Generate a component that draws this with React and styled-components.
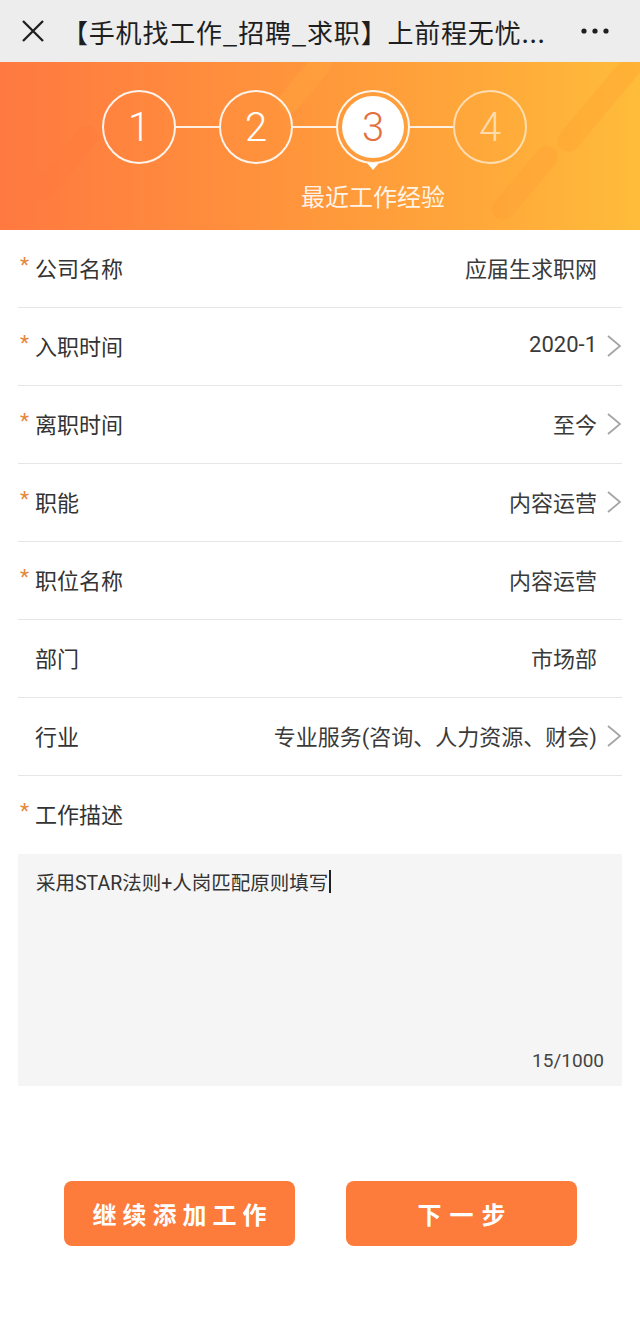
import React from 'react'
import styled, { createGlobalStyle } from 'styled-components'

const GlobalStyle = createGlobalStyle`
    body {
        margin: 0;
        background: #ffffff;
        font-family: Roboto, "Noto Sans CJK SC", sans-serif;
    }
`

const Page = styled.div`
    width: 640px;
    min-height: 1327px;
    background: #fff;
    display: flex;
    flex-direction: column;
`

const TopBar = styled.div`
    height: 62px;
    background: #ededed;
    display: flex;
    align-items: center;
    padding: 0 31px 0 21px;
`

const TopTitle = styled.div`
    flex: 1;
    margin-left: 17px;
    font-size: 26px;
    color: #1e1e1e;
    white-space: nowrap;
    font-family: "Noto Sans CJK SC", sans-serif;
    letter-spacing: 0.8px;
`

const Banner = styled.div`
    position: relative;
    overflow: hidden;
    height: 168px;
    background: linear-gradient(90deg, #ff7940 0%, #ff913c 40%, #ffa83a 75%, #ffbc3a 100%);
`

const Streak = styled.div`
    position: absolute;
    left: ${p => p.x}px;
    top: ${p => p.y}px;
    width: ${p => p.w}px;
    height: 22px;
    border-radius: 11px;
    transform: rotate(-50deg);
    background: ${p => p.c};
`

const Stepper = styled.div`
    position: relative;
    display: flex;
    align-items: center;
    padding: 28px 0 0 102px;
`

const Connector = styled.div`
    width: 43px;
    height: 2px;
    background: rgba(255, 255, 255, 0.85);
`

const StepWrap = styled.div`
    position: relative;
    width: 74px;
    height: 74px;
`

const Circle = styled.div`
    box-sizing: border-box;
    width: 74px;
    height: 74px;
    border-radius: 50%;
    border: 2px solid ${p => (p.dim ? 'rgba(255,255,255,0.6)' : 'rgba(255,255,255,0.9)')};
    display: flex;
    align-items: center;
    justify-content: center;
    font-size: 40px;
    font-weight: 300;
    color: ${p => (p.dim ? 'rgba(255,255,255,0.6)' : '#fff')};
`

const ActiveInner = styled.div`
    width: 62px;
    height: 62px;
    border-radius: 50%;
    background: #fff;
    display: flex;
    align-items: center;
    justify-content: center;
    color: #e46f3f;
    font-size: 40px;
    font-weight: 300;
`

const Pointer = styled.div`
    position: absolute;
    left: 50%;
    bottom: -6px;
    margin-left: -6px;
    width: 0;
    height: 0;
    border-left: 6px solid transparent;
    border-right: 6px solid transparent;
    border-top: 7px solid #fff;
`

const StepLabel = styled.div`
    position: absolute;
    top: 88px;
    left: 50%;
    transform: translateX(-50%);
    white-space: nowrap;
    font-size: 24px;
    color: rgba(255, 255, 255, 0.9);
    font-family: "Noto Sans CJK SC", sans-serif;
`

const Form = styled.div`
    display: flex;
    flex-direction: column;
    padding: 0 18px;
`

const Row = styled.div`
    box-sizing: border-box;
    height: 78px;
    padding: 0 0 4px 2px;
    display: flex;
    align-items: center;
    border-bottom: ${p => (p.last ? 'none' : '1px solid #e6e6e6')};
`

const Star = styled.span`
    width: 15px;
    font-size: 21px;
    color: #e5863a;
    margin-top: -4px;
`

const Label = styled.span`
    flex: 1;
    font-size: 22px;
    color: #333;
    font-family: "Noto Sans CJK SC", sans-serif;
`

const Value = styled.span`
    font-size: 22px;
    color: #3a3a3a;
    font-family: Roboto, "Noto Sans CJK SC", sans-serif;
`

const ArrowSlot = styled.span`
    width: 25px;
    display: flex;
    justify-content: flex-end;
    align-items: center;
`

const TextBox = styled.div`
    height: 232px;
    background: #f5f5f5;
    display: flex;
    flex-direction: column;
    justify-content: space-between;
    padding: 13px 18px 14px 18px;
    box-sizing: border-box;
`

const BoxText = styled.div`
    font-size: 19.5px;
    color: #333;
    display: flex;
    align-items: center;
`

const Caret = styled.span`
    width: 2px;
    height: 23px;
    background: #222;
    margin-left: 1px;
`

const Counter = styled.div`
    align-self: flex-end;
    font-size: 19px;
    color: #444;
`

const Buttons = styled.div`
    display: flex;
    gap: 51px;
    padding: 95px 0 0 64px;
`

const Button = styled.button`
    width: 231px;
    height: 65px;
    border: none;
    border-radius: 8px;
    background: #fd7b3b;
    color: #fff;
    font-size: 24px;
    font-weight: 700;
    letter-spacing: ${p => p.spacing}px;
    font-family: "Noto Sans CJK SC", sans-serif;
    padding: 0 0 0 ${p => p.spacing}px;
`

const CloseIcon = () => (
    <svg width="24" height="24" viewBox="0 0 24 24">
        <path d="M2 2 L22 22 M22 2 L2 22" stroke="#1e1e1e" strokeWidth="2.3" fill="none" />
    </svg>
)

const MoreIcon = () => (
    <svg width="28" height="8" viewBox="0 0 28 8">
        <circle cx="3" cy="4" r="2.6" fill="#1e1e1e" />
        <circle cx="14" cy="4" r="2.6" fill="#1e1e1e" />
        <circle cx="25" cy="4" r="2.6" fill="#1e1e1e" />
    </svg>
)

const Chevron = () => (
    <svg width="16" height="24" viewBox="0 0 16 24">
        <path d="M2 3 L14 13 L2 23" stroke="#a3a3a3" strokeWidth="1.7" fill="none" />
    </svg>
)

const fields = [
    { label: '公司名称', value: '应届生求职网', required: true },
    { label: '入职时间', value: '2020-1', required: true, arrow: true },
    { label: '离职时间', value: '至今', required: true, arrow: true },
    { label: '职能', value: '内容运营', required: true, arrow: true },
    { label: '职位名称', value: '内容运营', required: true },
    { label: '部门', value: '市场部' },
    { label: '行业', value: '专业服务(咨询、人力资源、财会)', arrow: true },
]

const steps = [1, 2, 3, 4]
const current = 3

const App = () => {
    return (
        <Page>
            <GlobalStyle />
            <TopBar>
                <CloseIcon />
                <TopTitle>【手机找工作_招聘_求职】上前程无忧...</TopTitle>
                <MoreIcon />
            </TopBar>

            <Banner>
                <Streak x={270} y={10} w={70} c="rgba(255,170,60,0.35)" />
                <Streak x={540} y={30} w={120} c="rgba(255,160,50,0.35)" />
                <Streak x={480} y={110} w={90} c="rgba(255,150,50,0.25)" />
                <Streak x={20} y={90} w={90} c="rgba(255,120,60,0.25)" />
                <Stepper>
                    {steps.map((n, i) => (
                        <React.Fragment key={n}>
                            {i > 0 && <Connector />}
                            <StepWrap>
                                {n === current ? (
                                    <>
                                        <Circle>
                                            <ActiveInner>{n}</ActiveInner>
                                        </Circle>
                                        <Pointer />
                                        <StepLabel>最近工作经验</StepLabel>
                                    </>
                                ) : (
                                    <Circle dim={n > current}>{n}</Circle>
                                )}
                            </StepWrap>
                        </React.Fragment>
                    ))}
                </Stepper>
            </Banner>

            <Form>
                {fields.map(f => (
                    <Row key={f.label}>
                        <Star>{f.required ? '*' : ''}</Star>
                        <Label>{f.label}</Label>
                        <Value>{f.value}</Value>
                        <ArrowSlot>{f.arrow && <Chevron />}</ArrowSlot>
                    </Row>
                ))}
                <Row last>
                    <Star>*</Star>
                    <Label>工作描述</Label>
                </Row>
                <TextBox>
                    <BoxText>
                        采用STAR法则+人岗匹配原则填写<Caret />
                    </BoxText>
                    <Counter>15/1000</Counter>
                </TextBox>
            </Form>

            <Buttons>
                <Button spacing={6}>继续添加工作</Button>
                <Button spacing={8}>下一步</Button>
            </Buttons>
        </Page>
    )
}

export default App
